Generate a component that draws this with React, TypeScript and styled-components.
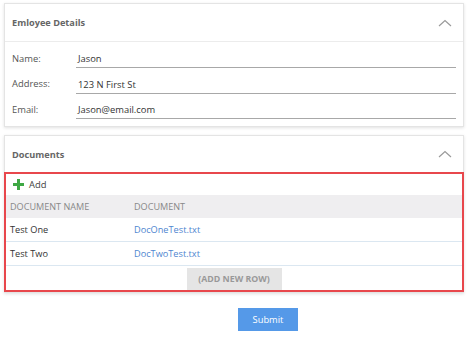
import React from 'react';
import styled, {createGlobalStyle} from "styled-components";

const GlobalStyle = createGlobalStyle`
    html, body {
        margin: 0;
        padding: 0;
        background: #fff;
        font-family: "Open Sans", "Liberation Sans", sans-serif;
        color: #333;
    }
`;

const fields = [
    {label: "Name:", value: "Jason"},
    {label: "Address:", value: "123 N First St"},
    {label: "Email:", value: "Jason@email.com"},
];

const documents = [
    {name: "Test One", file: "DocOneTest.txt"},
    {name: "Test Two", file: "DocTwoTest.txt"},
];

const Chevron: React.FC = () => (
    <svg width="14" height="8" viewBox="0 0 14 8">
        <path d="M1 7 L7 1.5 L13 7" fill="none" stroke="#9a9a9a" strokeWidth="1.2"/>
    </svg>
);

const PlusIcon: React.FC = () => (
    <svg width="11" height="11" viewBox="0 0 11 11">
        <rect x="4" y="0" width="3" height="11" fill="#3ea844"/>
        <rect x="0" y="4" width="11" height="3" fill="#3ea844"/>
    </svg>
);

const App: React.FC = () => {
    return (
        <>
            <GlobalStyle/>
            <Page>
                <Card>
                    <CardHeader size="large">
                        <CardTitle>Emloyee Details</CardTitle>
                        <Chevron/>
                    </CardHeader>
                    <FormBody>
                        {fields.map((f) =>
                            <FieldRow key={f.label}>
                                <FieldLabel>{f.label}</FieldLabel>
                                <FieldInput>{f.value}</FieldInput>
                            </FieldRow>
                        )}
                    </FormBody>
                </Card>

                <Card>
                    <CardHeader size="small">
                        <CardTitle>Documents</CardTitle>
                        <Chevron/>
                    </CardHeader>
                    <GridBox>
                        <Toolbar>
                            <PlusIcon/>
                            <span>Add</span>
                        </Toolbar>
                        <GridRow header="true">
                            <Cell>Document Name</Cell>
                            <Cell>Document</Cell>
                        </GridRow>
                        {documents.map((d) =>
                            <GridRow key={d.name} header="false">
                                <Cell>{d.name}</Cell>
                                <Cell><DocLink>{d.file}</DocLink></Cell>
                            </GridRow>
                        )}
                        <AddRowBar>
                            <AddRowButton>(ADD NEW ROW)</AddRowButton>
                        </AddRowBar>
                    </GridBox>
                </Card>

                <Footer>
                    <SubmitButton>Submit</SubmitButton>
                </Footer>
            </Page>
        </>
    );
};

const Page = styled.div`
    width: 460px;
    padding: 3px 0 0 4px;
    display: flex;
    flex-direction: column;
    gap: 8px;
`;
const Card = styled.div`
    background: #fff;
    border: 1px solid #e4e4e4;
    box-shadow: 0 1px 3px rgba(0, 0, 0, 0.12);
`;
const CardHeader = styled.div<{ size: "large" | "small" }>`
    height: ${(props) => props.size === "large" ? "37px" : "36px"};
    display: flex;
    align-items: center;
    justify-content: space-between;
    padding: 0 11px 0 7px;
    border-bottom: 1px solid #ececec;
`;
const CardTitle = styled.div`
    font-size: 9.2px;
    font-weight: 700;
    color: #666;
`;
const FormBody = styled.div`
    display: flex;
    flex-direction: column;
    gap: 9px;
    padding: 9.5px 7px 7px 7px;
`;
const FieldRow = styled.div`
    display: grid;
    grid-template-columns: 64px 1fr;
    align-items: end;
`;
const FieldLabel = styled.div`
    font-size: 9.4px;
    line-height: 13px;
    color: #555;
    padding-bottom: 3.5px;
`;
const FieldInput = styled.div`
    font-size: 9.4px;
    line-height: 13px;
    color: #333;
    padding: 0 0 2px 2px;
    border-bottom: 1.5px solid #a8a8a8;
`;
const GridBox = styled.div`
    margin: -1px -1px 0;
    border: 2px solid #e8474c;
    display: flex;
    flex-direction: column;
`;
const Toolbar = styled.div`
    height: 21px;
    display: flex;
    align-items: center;
    gap: 5px;
    padding: 0 7px;
    font-size: 9.4px;
    color: #444;
`;
const GridRow = styled.div<{ header: "true" | "false" }>`
    display: grid;
    grid-template-columns: 124px 1fr;
    align-items: center;
    height: 23px;
    background: ${(props) => props.header === "true" ? "#efeef0" : "#fff"};
    border-bottom: ${(props) => props.header === "true" ? "none" : "1px solid #dbe7f1"};
    font-size: ${(props) => props.header === "true" ? "9.1px" : "9.2px"};
    color: ${(props) => props.header === "true" ? "#888" : "#333"};
    text-transform: ${(props) => props.header === "true" ? "uppercase" : "none"};
`;
const Cell = styled.div`
    padding-left: 4px;
`;
const DocLink = styled.span`
    color: #4f86d0;
`;
const AddRowBar = styled.div`
    display: flex;
    justify-content: center;
    padding: 2px 0 0;
`;
const AddRowButton = styled.div`
    width: 95px;
    height: 22px;
    display: flex;
    align-items: center;
    justify-content: center;
    background: #e5e5e5;
    color: #999;
    font-size: 8.8px;
    font-weight: 700;
`;
const Footer = styled.div`
    display: flex;
    padding: 7px 0 0 234px;
`;
const SubmitButton = styled.div`
    width: 60px;
    height: 23px;
    display: flex;
    align-items: center;
    justify-content: center;
    background: #5599e8;
    color: #fff;
    font-size: 9.3px;
`;

export default App;
